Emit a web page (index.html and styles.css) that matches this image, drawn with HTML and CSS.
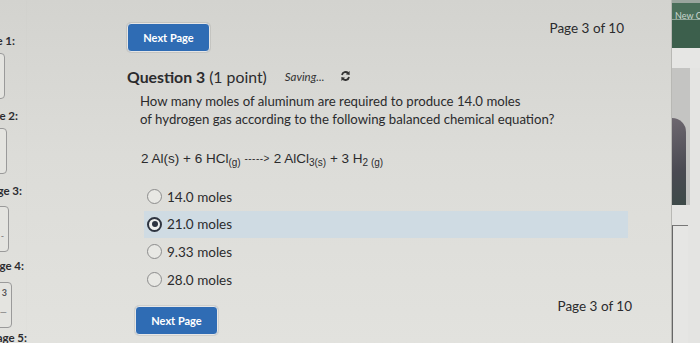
FILE: index.html
```html
<!DOCTYPE html>
<html>
<head>
<meta charset="utf-8">
<link rel="stylesheet" href="styles.css">
</head>
<body>
<div class="page">
  <aside class="sidebar">
    <div class="nav-item n1"><div class="nav-label">Page 1:</div><div class="nav-box b1"></div></div>
    <div class="nav-item n2"><div class="nav-label">Page 2:</div><div class="nav-box b2"></div></div>
    <div class="nav-item n3"><div class="nav-label">Page 3:</div><div class="nav-box b3"><span class="dash">-</span></div></div>
    <div class="nav-item n4"><div class="nav-label">Page 4:</div><div class="nav-box b4"><span class="mark">3</span><span class="dash">—</span></div></div>
    <div class="nav-item n5"><div class="nav-label">Page 5:</div></div>
  </aside>

  <main class="main">
    <div class="top-row">
      <button class="next-btn">Next Page</button>
      <div class="page-count">Page 3 of 10</div>
    </div>

    <div class="q-head">
      <span class="q-title"><b>Question 3</b> (1 point)</span>
      <span class="saving">Saving...</span>
      <svg class="sync" width="11" height="12" viewBox="0 0 11 12">
        <path d="M2 5 A3.6 3.6 0 0 1 8.2 3.2" fill="none" stroke="#333" stroke-width="1.8"/>
        <path d="M9.6 1 L9.6 5 L5.8 4.2 Z" fill="#333"/>
        <path d="M9 7 A3.6 3.6 0 0 1 2.8 8.8" fill="none" stroke="#333" stroke-width="1.8"/>
        <path d="M1.4 11 L1.4 7 L5.2 7.8 Z" fill="#333"/>
      </svg>
    </div>

    <p class="q-text">How many moles of aluminum are required to produce 14.0 moles<br>of hydrogen gas according to the following balanced chemical equation?</p>

    <p class="equation">2 Al(s) + 6 HCl<sub>(g)</sub> <span class="arrow">-----&gt;</span> 2 AlCl<sub>3(s)</sub> + 3 H<sub>2 (g)</sub></p>

    <div class="options">
      <label class="opt"><span class="radio"></span>14.0 moles</label>
      <label class="opt selected"><span class="radio on"></span>21.0 moles</label>
      <label class="opt"><span class="radio"></span>9.33 moles</label>
      <label class="opt"><span class="radio"></span>28.0 moles</label>
    </div>

    <div class="bottom-row">
      <button class="next-btn">Next Page</button>
      <div class="page-count">Page 3 of 10</div>
    </div>
  </main>

  <aside class="right-strip">
    <div class="rs-top"><span class="rs-text">New Ch</span></div>
    <div class="rs-green"></div>
    <div class="rs-gap"></div>
    <div class="rs-image"><div class="blob"></div></div>
    <div class="rs-gap2"></div>
    <div class="rs-box"></div>
  </aside>
</div>
</body>
</html>
```

FILE: styles.css
```css
html, body {
  margin: 0;
  padding: 0;
  width: 700px;
  height: 343px;
  overflow: hidden;
}
body {
  font-family: Lato, "Open Sans", sans-serif;
  color: #2b2b2d;
  background: #d9d9d5;
}
.page {
  display: flex;
  width: 700px;
  height: 343px;
  background: linear-gradient(180deg, #d3d3cf 0%, #dcdcd8 45%, #e2e2de 100%);
}

/* sidebar */
.sidebar {
  width: 27px;
  flex: none;
  overflow: hidden;
  display: flex;
  flex-direction: column;
  align-items: flex-end;
  padding-top: 33px;
}
.nav-item {
  flex: none;
  display: flex;
  flex-direction: column;
  align-items: flex-end;
  width: 60px;
  height: 75px;
}
.n4 { height: 72px; }
.nav-label {
  font-weight: 700;
  font-size: 11.5px;
  color: #2c2c30;
  white-space: nowrap;
  height: 15px;
  line-height: 15px;
}
.n1 .nav-label { margin-right: 12px; }
.n2 .nav-label { margin-right: 9px; }
.n3 .nav-label { margin-right: 5px; }
.n4 .nav-label { margin-right: 3px; }
.n5 .nav-label { margin-right: 0; }
.nav-box {
  margin-top: 5px;
  height: 44px;
  width: 50px;
  border: 1px solid #9a9a9a;
  border-radius: 4px;
  background: #e4e4e0;
  position: relative;
}
.b1 { margin-right: 22px; }
.b2 { margin-right: 20px; }
.b3 { margin-right: 18px; margin-top: 8px; }
.b4 { margin-right: 15px; margin-top: 9px; }
.dash { position: absolute; right: 4px; bottom: 10px; font-size: 9px; color: #777; }
.mark { position: absolute; right: 4px; top: 4px; font-size: 9px; color: #555; font-weight: 700; }

/* main */
.main {
  flex: none;
  width: 645px;
  box-sizing: border-box;
  padding-left: 100px;
  display: flex;
  flex-direction: column;
  border-right: 1px solid #b8b8b4;
  box-shadow: 1px 0 2px rgba(0,0,0,0.15);
}
.top-row {
  display: flex;
  justify-content: space-between;
  align-items: flex-start;
  padding-top: 23px;
  width: 497px;
}
.next-btn {
  width: 83px;
  height: 29px;
  border: 1px solid #e6e6e6;
  border-radius: 4px;
  background: #2f6cb4;
  color: #fff;
  font-family: Lato, sans-serif;
  font-weight: 700;
  font-size: 11px;
  padding: 0;
  box-shadow: 0 0 0 1px rgba(0,0,0,0.08);
}
.page-count {
  font-size: 13.5px;
  margin-top: -3px;
  color: #2b2b2d;
}
.q-head {
  display: flex;
  align-items: center;
  margin-top: 14px;
  height: 20px;
}
.q-title {
  font-size: 15.8px;
  color: #2b2b2d;
}
.q-title b { font-weight: 700; }
.saving {
  font-style: italic;
  font-size: 11.5px;
  margin-left: 18px;
  color: #333;
}
.sync { margin-left: 16px; }

.q-text {
  margin: 6px 0 0 13px;
  font-size: 13.2px;
  line-height: 18px;
  color: #2b2b2d;
}
.equation {
  margin: 22px 0 0 14px;
  font-family: "Liberation Sans", Arial, sans-serif;
  font-size: 13.5px;
  line-height: 18px;
  color: #2b2b2d;
}
.equation sub {
  font-size: 10px;
  vertical-align: -3px;
  line-height: 0;
}
.arrow { font-size: 10px; letter-spacing: 0.5px; vertical-align: 1px; }

.options {
  margin-top: 15px;
  margin-left: 17px;
  width: 484px;
  display: flex;
  flex-direction: column;
}
.opt {
  display: flex;
  align-items: center;
  height: 27.6px;
  font-size: 13.5px;
  color: #2b2b2d;
  padding-left: 3px;
}
.opt.selected {
  background: #cfdbe3;
}
.radio {
  width: 15px;
  height: 15px;
  border-radius: 50%;
  border: 1px solid #8c8c8c;
  background: #e8e8e4;
  box-sizing: border-box;
  margin-right: 5px;
  display: flex;
  align-items: center;
  justify-content: center;
}
.radio.on {
  border: 2px solid #2e3440;
  background: #f0f0ee;
}
.radio.on::after {
  content: "";
  width: 6px;
  height: 6px;
  border-radius: 50%;
  background: #2e3440;
}

.bottom-row {
  display: flex;
  justify-content: space-between;
  align-items: flex-start;
  margin-top: 13px;
  margin-left: 8px;
  width: 497px;
}
.bottom-row .page-count { margin-top: -8px; }

/* right strip */
.right-strip {
  flex: 1;
  display: flex;
  flex-direction: column;
  background: #e4e4e2;
}
.rs-top {
  height: 20px;
  background: #4a6e5a;
  border-top: 3px solid #9aa59e;
  box-sizing: border-box;
  border-bottom: 1px solid #8fa597;
  overflow: hidden;
}
.rs-text {
  font-size: 9px;
  color: #c9d6ce;
  padding-left: 3px;
  white-space: nowrap;
  line-height: 15px;
}
.rs-green { height: 28px; background: #3c5f4c; }
.rs-gap { height: 20px; background: #e6e6e4; }
.rs-image {
  height: 137px;
  width: 18px;
  background: #c4c4c2;
  position: relative;
  overflow: hidden;
}
.blob {
  position: absolute;
  left: 0;
  top: 50px;
  width: 14px;
  height: 87px;
  background: linear-gradient(160deg, #6e6870 0%, #4a4a52 60%, #3d4a48 100%);
  border-top-right-radius: 14px;
}
.rs-gap2 { height: 20px; background: #e4e4e2; }
.rs-box {
  flex: 1;
  border-left: 1px solid #666;
  border-top: 1px solid #777;
  width: 15px;
  background: #e6e6e4;
}
```
